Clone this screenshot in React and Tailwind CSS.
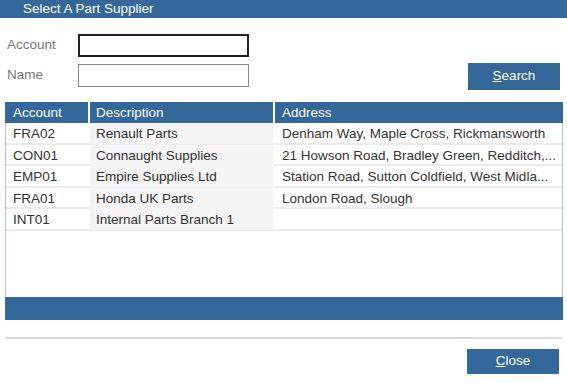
import { useState } from 'react'

// addresses are shown as the grid cuts them in the reference
const suppliers = [
  { account: 'FRA02', description: 'Renault Parts', address: 'Denham Way, Maple Cross, Rickmansworth' },
  { account: 'CON01', description: 'Connaught Supplies', address: '21 Howson Road, Bradley Green, Redditch,...' },
  { account: 'EMP01', description: 'Empire Supplies Ltd', address: 'Station Road, Sutton Coldfield, West Midla...' },
  { account: 'FRA01', description: 'Honda UK Parts', address: 'London Road, Slough' },
  { account: 'INT01', description: 'Internal Parts Branch 1', address: '' },
]

export default function App() {
  const [account, setAccount] = useState('')
  const [name, setName] = useState('')

  return (
    <div className="w-[567px] h-[383px] bg-white text-[13.5px] text-[#333] font-['Liberation_Sans',Arial,sans-serif] overflow-hidden">

      {/* title bar */}
      <div className="h-[18px] bg-[#34679a] text-white pl-[23px] leading-[18px]">
        Select A Part Supplier
      </div>

      {/* search form */}
      <div className="flex items-end justify-between pl-[7px] pr-[7px] pt-[16px]">
        <div className="flex flex-col gap-[7px]">
          <div className="flex items-center">
            <span className="w-[71px] text-[#777]">Account</span>
            <input
              value={account}
              onChange={(e) => setAccount(e.target.value)}
              className="w-[171px] h-[23px] border-2 border-[#222] outline-none px-1"
            />
          </div>
          <div className="flex items-center">
            <span className="w-[71px] text-[#777]">Name</span>
            <input
              value={name}
              onChange={(e) => setName(e.target.value)}
              className="w-[171px] h-[23px] border border-[#888] outline-none px-1"
            />
          </div>
        </div>
        <button className="w-[92px] h-[27px] mb-[-3px] bg-[#34679a] text-white">
          <span className="underline">S</span>earch
        </button>
      </div>

      {/* grid */}
      <div className="ml-[5px] w-[558px] mt-[15px] flex flex-col">
        <div className="grid grid-cols-[83px_183px_1fr] gap-x-[2px] h-[21px] bg-white">
          <div className="bg-[#34679a] text-white pl-[8px] leading-[21px]">Account</div>
          <div className="bg-[#34679a] text-white pl-[6px] leading-[21px]">Description</div>
          <div className="bg-[#34679a] text-white pl-[7px] leading-[21px]">Address</div>
        </div>
        <div className="h-[174px] border-x border-[#a9bfd6] bg-white">
          {suppliers.map((s) => (
            <div key={s.account} className="grid grid-cols-[82px_183px_1fr] gap-x-[2px] h-[21.5px] border-b-2 border-[#ebebeb]">
              <div className="pl-[7px] leading-[21px]">{s.account}</div>
              <div className="pl-[6px] leading-[21px] bg-[#f4f4f4]">{s.description}</div>
              <div className="pl-[7px] leading-[21px] whitespace-nowrap">{s.address}</div>
            </div>
          ))}
        </div>
        <div className="h-[23px] bg-[#34679a]"></div>
      </div>

      {/* footer */}
      <div className="ml-[5px] w-[557px] mt-[17px] h-[2px] bg-[#dcdcdc]"></div>
      <div className="flex justify-end pr-[8px] pt-[10px]">
        <button className="w-[92px] h-[25px] bg-[#34679a] text-white">
          <span className="underline">C</span>lose
        </button>
      </div>
    </div>
  )
}
